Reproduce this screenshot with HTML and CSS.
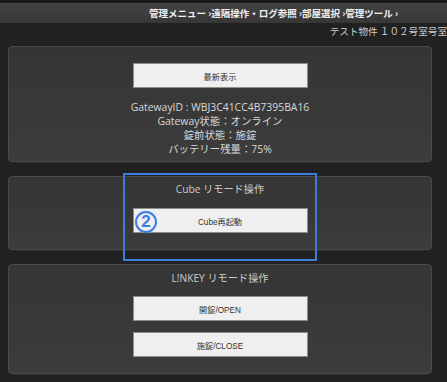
FILE: index.html
```html
<!DOCTYPE html>
<html lang="ja">
<head>
<meta charset="utf-8">
<link rel="stylesheet" href="styles.css">
</head>
<body>
<div class="page">
  <div class="topstrip"></div>
  <div class="navbar">管理メニュー ›遠隔操作・ログ参照 ›部屋選択 ›管理ツール ›</div>
  <div class="room">テスト物件 １０２号室号室</div>

  <section class="card card-info">
    <button class="btn">最新表示</button>
    <div class="info">
      <div>GatewayID : WBJ3C41CC4B7395BA16</div>
      <div>Gateway状態：オンライン</div>
      <div>錠前状態：施錠</div>
      <div>バッテリー残量：75%</div>
    </div>
  </section>

  <section class="card card-cube">
    <div class="title">Cube リモード操作</div>
    <button class="btn">Cube再起動</button>
  </section>

  <section class="card card-linkey">
    <div class="title">L!NKEY リモード操作</div>
    <button class="btn">開錠/OPEN</button>
    <button class="btn">施錠/CLOSE</button>
  </section>

  <div class="highlight"></div>
  <div class="marker">2</div>
</div>
</body>
</html>
```

FILE: styles.css
```css
html, body {
  margin: 0;
  padding: 0;
  background: #212121;
  overflow: hidden;
}
.page {
  position: relative;
  width: 447px;
  height: 382px;
  font-family: "Open Sans", "Noto Sans CJK JP", sans-serif;
  overflow: hidden;
}
.topstrip {
  height: 3px;
  background: #1a1a1a;
}
.navbar {
  height: 20px;
  line-height: 20px;
  background: linear-gradient(#434343, #373737);
  color: #f0f0f0;
  font-size: 9.5px;
  font-weight: bold;
  text-align: right;
  padding-right: 49px;
  white-space: nowrap;
  font-family: "Noto Sans CJK JP", sans-serif;
}
.room {
  margin-top: 1px;
  height: 14px;
  line-height: 14px;
  font-size: 9.6px;
  color: #cfcfcf;
  text-align: right;
  white-space: nowrap;
  font-family: "Noto Sans CJK JP", sans-serif;
}
.card {
  margin: 8px 0 0 8px;
  width: 422px;
  border: 1px solid #4a4a4a;
  border-radius: 4px;
  background: linear-gradient(#353535, #3c3c3c);
  box-shadow: 0 1px 0 #2a2a2a;
  display: flex;
  flex-direction: column;
  align-items: center;
}
.card + .card {
  margin-top: 14px;
}
.card-info {
  padding: 16px 0 5px;
}
.card-cube {
  padding: 5px 0 16px;
}
.card-linkey {
  padding: 6px 0 16px;
}
.btn {
  width: 175px;
  height: 25px;
  margin: 0;
  padding: 0;
  border: 1px solid #8e8e8e;
  background: #efefef;
  color: #333;
  font-size: 8.2px;
  font-family: "Liberation Sans", "Noto Sans CJK JP", sans-serif;
  box-sizing: border-box;
}
.info {
  margin-top: 12px;
  color: #d8d8d8;
  font-size: 10.4px;
  line-height: 14px;
  text-align: center;
}
.title {
  color: #cccccc;
  font-size: 10.2px;
  line-height: 14px;
}
.card-cube .title {
  margin-bottom: 12px;
}
.card-linkey .title {
  margin-bottom: 11px;
}
.card-linkey .btn + .btn {
  margin-top: 11px;
}
.highlight {
  position: absolute;
  left: 123px;
  top: 173px;
  width: 190px;
  height: 84px;
  border: 2px solid #3b7cdc;
}
.marker {
  position: absolute;
  left: 135px;
  top: 211px;
  width: 18px;
  height: 18px;
  border: 2.5px solid #3b7ee2;
  border-radius: 50%;
  color: #3b7ee2;
  font-family: "Liberation Sans", sans-serif;
  font-weight: bold;
  font-size: 17px;
  line-height: 18px;
  text-align: center;
  box-shadow: 0 0 1px #cfe0f8;
}
```
